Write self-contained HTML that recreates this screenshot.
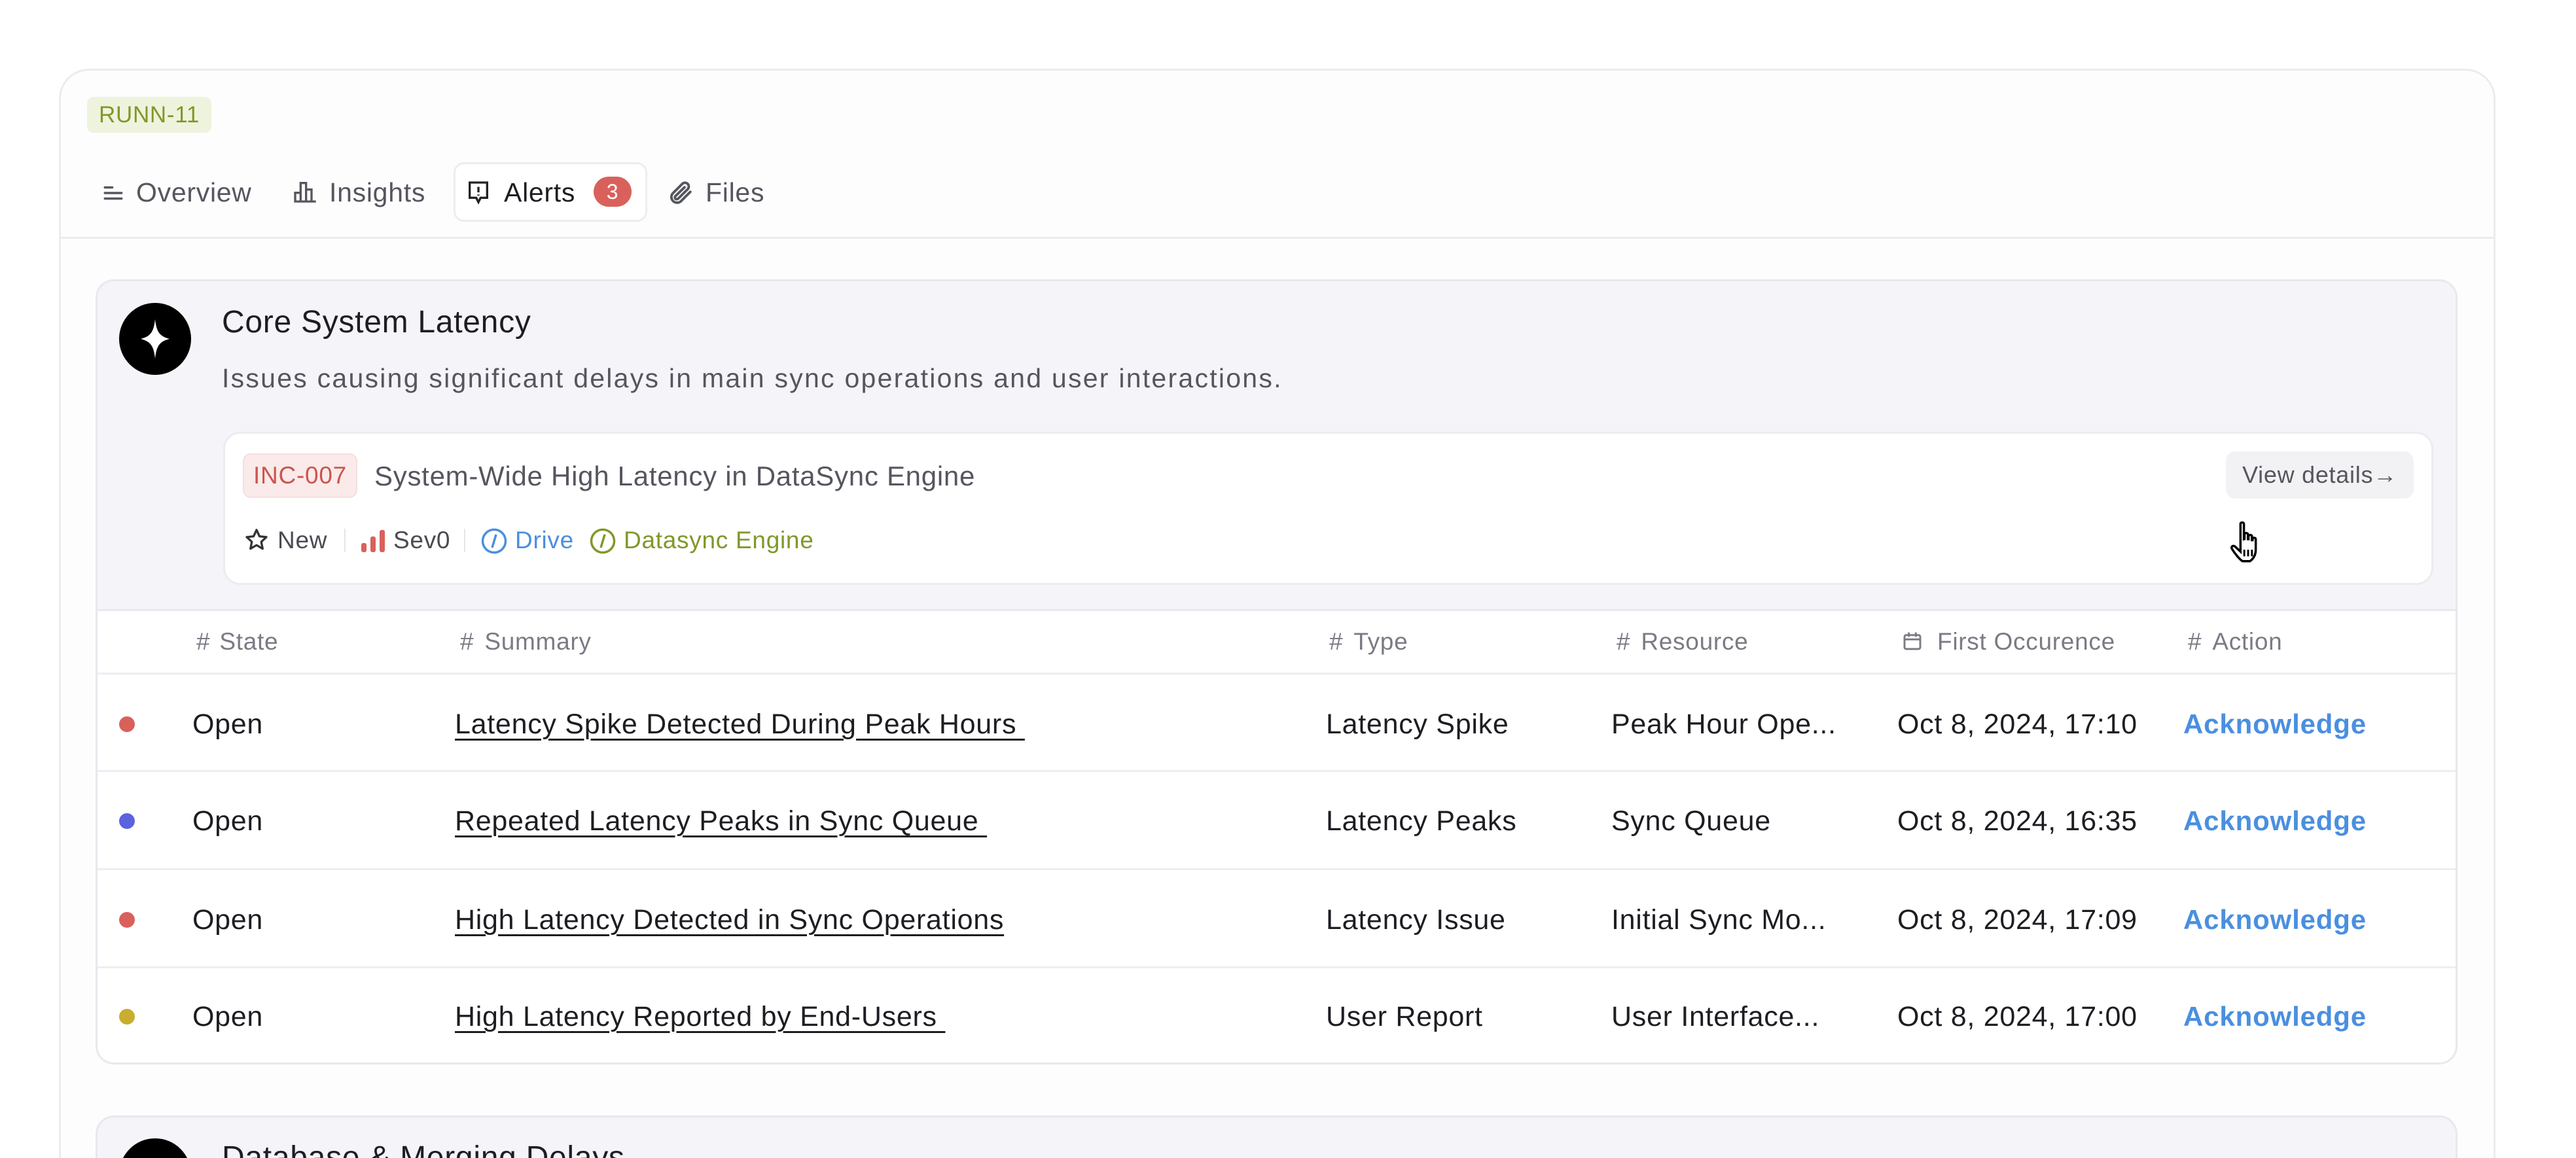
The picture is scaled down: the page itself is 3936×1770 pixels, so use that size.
<!DOCTYPE html>
<html><head><meta charset="utf-8"><style>
*{margin:0;padding:0;box-sizing:border-box}
html,body{width:3936px;height:1770px;overflow:hidden}
body{background:#fff;font-family:"Liberation Sans",sans-serif;color:#1d1d22;letter-spacing:0.045em}
#root{position:relative;width:3936px;height:1770px;overflow:hidden}
.a{position:absolute;white-space:nowrap}
.outer{left:90px;top:105px;width:3723px;height:1665px;border:3px solid #ececee;border-bottom:none;border-radius:46px 46px 0 0;background:#fdfdfd}
.tab{font-size:41px;color:#55565e;top:270px;line-height:48px}
.grp{left:146px;top:427px;width:3609px;height:1200px;border:3px solid #e8e8ee;border-radius:28px;background:#fff;overflow:hidden}
.hdr{font-size:37px;color:#7a7b84;top:958px;line-height:46px}
.cell{font-size:43px;line-height:50px}
.sep{left:149px;width:3603px;height:3px;background:#eeeef2}
.dot{width:24px;height:24px;border-radius:50%;left:182px}
.ack{color:#4a8fe0;font-weight:bold;font-size:42px;letter-spacing:0.02em}
.sum{text-decoration:underline;text-underline-offset:8px;text-decoration-thickness:3px}
</style></head><body><div id="root">
<div class="a outer"></div>
<div class="a" style="left:133px;top:148px;width:190px;height:55px;background:#eef3dd;border-radius:10px;color:#80982a;font-size:35px;line-height:55px;text-align:center;letter-spacing:0.02em">RUNN-11</div>
<svg class="a" style="left:156px;top:278px" width="34" height="34" viewBox="0 0 24 24" fill="none" stroke="#55565e" stroke-width="2.4" stroke-linecap="round"><path d="M3 6h8M3 12h18M3 18h18"/></svg>
<div class="a tab" style="left:208px">Overview</div>
<svg class="a" style="left:446px;top:272px" width="40" height="42" viewBox="0 0 24 24" fill="none" stroke="#55565e" stroke-width="2"><path d="M3 21V13h5v8M8 21V4h5v17M13 21V10h5v11M2 21h20"/></svg>
<div class="a tab" style="left:503px">Insights</div>
<div class="a" style="left:693px;top:248px;width:296px;height:91px;border:3px solid #ededf0;border-radius:16px;background:#fff"></div>
<svg class="a" style="left:711px;top:272px" width="40" height="44" viewBox="0 0 24 24" fill="none" stroke="#222" stroke-width="2"><path d="M4 3h16v14h-6l-2 4-2-4H4z"/><path d="M12 7v5M12 14v1"/></svg>
<div class="a tab" style="left:770px;color:#1d1d22">Alerts</div>
<div class="a" style="left:907px;top:270px;width:58px;height:46px;border-radius:23px;background:#d9615b;color:#fff;font-size:32px;line-height:46px;text-align:center">3</div>
<svg class="a" style="left:1018px;top:274px" width="42" height="42" viewBox="0 0 24 24" fill="none" stroke="#55565e" stroke-width="2.2" stroke-linecap="round"><path d="M21 11l-8.5 8.5a5 5 0 0 1-7-7L14 4a3.3 3.3 0 0 1 4.7 4.7L10.3 17a1.6 1.6 0 0 1-2.3-2.3L16 7"/></svg>
<div class="a tab" style="left:1078px">Files</div>
<div class="a" style="left:93px;top:362px;width:3717px;height:3px;background:#ececee"></div>
<div class="a grp">
 <div style="position:absolute;left:0;top:0;width:100%;height:504px;background:#f4f4f9;border-bottom:3px solid #e8e8ee"></div>
</div>
<div class="a" style="left:182px;top:463px;width:110px;height:110px;border-radius:50%;background:#000"></div>
<svg class="a" style="left:215px;top:488px" width="44" height="60" viewBox="0 0 44 60"><path d="M22 0C24 18 28 26 44 30 28 34 24 42 22 60 20 42 16 34 0 30 16 26 20 18 22 0Z" fill="#fff"/></svg>
<div class="a" style="left:339px;top:464px;font-size:48px;line-height:58px">Core System Latency</div>
<div class="a" style="left:339px;top:553px;font-size:41px;color:#55565e;line-height:50px;letter-spacing:0.055em">Issues causing significant delays in main sync operations and user interactions.</div>
<div class="a" style="left:341px;top:660px;width:3377px;height:234px;background:#fff;border:3px solid #ececf0;border-radius:26px"></div>
<div class="a" style="left:371px;top:693px;width:175px;height:68px;background:#fbeaea;border:2px solid #f6dede;border-radius:12px;color:#c9564f;font-size:37px;line-height:64px;text-align:center;letter-spacing:0.02em">INC-007</div>
<div class="a" style="left:572px;top:703px;font-size:42px;color:#55565e;line-height:50px">System-Wide High Latency in DataSync Engine</div>
<div class="a" style="left:3401px;top:690px;width:287px;height:72px;background:#f2f2f5;border-radius:14px;color:#55565e;font-size:36px;line-height:72px;text-align:center;letter-spacing:0.02em">View details→</div>
<svg class="a" style="left:374px;top:807px" width="36" height="36" viewBox="0 0 24 24" fill="none" stroke="#333" stroke-width="2.2" stroke-linejoin="round"><path d="M12 2l3 6.5 7 .8-5.2 4.8 1.4 7L12 17.5 5.8 21.1l1.4-7L2 9.3l7-.8z"/></svg>
<div class="a" style="left:424px;top:803px;font-size:37px;color:#4a4b52;line-height:46px">New</div>
<div class="a" style="left:526px;top:808px;width:2px;height:36px;background:#e6e6ea"></div>
<svg class="a" style="left:552px;top:810px" width="36" height="34" viewBox="0 0 18 17"><rect x="0" y="10" width="4" height="7" rx="1.5" fill="#d9615b"/><rect x="7" y="5" width="4" height="12" rx="1.5" fill="#d9615b"/><rect x="14" y="0" width="4" height="17" rx="1.5" fill="#d9615b"/></svg>
<div class="a" style="left:601px;top:803px;font-size:37px;color:#4a4b52;line-height:46px">Sev0</div>
<div class="a" style="left:709px;top:808px;width:2px;height:36px;background:#e6e6ea"></div>
<svg class="a" style="left:734px;top:806px" width="42" height="42" viewBox="0 0 24 24" fill="none" stroke="#4a8fe0" stroke-width="2"><circle cx="12" cy="12" r="10"/><path d="M13.5 7l-3 10" stroke-linecap="round"/></svg>
<div class="a" style="left:787px;top:803px;font-size:37px;color:#4a8fe0;line-height:46px">Drive</div>
<svg class="a" style="left:900px;top:806px" width="42" height="42" viewBox="0 0 24 24" fill="none" stroke="#80982a" stroke-width="2"><circle cx="12" cy="12" r="10"/><path d="M13.5 7l-3 10" stroke-linecap="round"/></svg>
<div class="a" style="left:953px;top:803px;font-size:37px;color:#80982a;line-height:46px">Datasync Engine</div>
<svg class="a" style="left:3400px;top:793px" width="70" height="74" viewBox="0 0 24 25"><path d="M8 2.5c0-1 1.8-1 1.8 0v8l.3-.1V8c0-1 1.8-1 1.8 0v2.5h.3V9c0-1 1.8-1 1.8 0v2h.3v-.5c0-1 1.7-1 1.7 0V16c0 3-1.5 5-3 6H9c-1.5-1-4-4-5.5-6.5-.6-1 .6-2 1.6-1.2L8 17z" fill="#fff" stroke="#000" stroke-width="1.2"/><path d="M10 16v3.5M12 16v3.5M14 16v3.5" stroke="#000" stroke-width="1"/></svg>
<div class="a hdr" style="left:300px"><span style="margin-right:14px">#</span>State</div>
<div class="a hdr" style="left:703px"><span style="margin-right:16px">#</span>Summary</div>
<div class="a hdr" style="left:2031px"><span style="margin-right:16px">#</span>Type</div>
<div class="a hdr" style="left:2470px"><span style="margin-right:16px">#</span>Resource</div>
<svg class="a" style="left:2906px;top:963px" width="32" height="34" viewBox="0 0 24 24" fill="none" stroke="#7a7b84" stroke-width="2.2"><rect x="3" y="5" width="18" height="16" rx="2"/><path d="M3 10h18M8 2v5M16 2v5"/></svg>
<div class="a hdr" style="left:2960px">First Occurence</div>
<div class="a hdr" style="left:3343px"><span style="margin-right:16px">#</span>Action</div>
<div class="a sep" style="top:1028px"></div>
<div class="a sep" style="top:1177px"></div>
<div class="a sep" style="top:1327px"></div>
<div class="a sep" style="top:1477px"></div>
<div class="a dot" style="top:1095px;background:#d9615b"></div>
<div class="a cell" style="left:294px;top:1082px">Open</div>
<div class="a cell sum" style="left:695px;top:1082px">Latency Spike Detected During Peak Hours&nbsp;</div>
<div class="a cell" style="left:2026px;top:1082px">Latency Spike</div>
<div class="a cell" style="left:2462px;top:1082px">Peak Hour Ope...</div>
<div class="a cell" style="left:2899px;top:1082px">Oct 8, 2024, 17:10</div>
<div class="a cell ack" style="left:3336px;top:1082px">Acknowledge</div>
<div class="a dot" style="top:1243px;background:#5b62e0"></div>
<div class="a cell" style="left:294px;top:1230px">Open</div>
<div class="a cell sum" style="left:695px;top:1230px">Repeated Latency Peaks in Sync Queue&nbsp;</div>
<div class="a cell" style="left:2026px;top:1230px">Latency Peaks</div>
<div class="a cell" style="left:2462px;top:1230px">Sync Queue</div>
<div class="a cell" style="left:2899px;top:1230px">Oct 8, 2024, 16:35</div>
<div class="a cell ack" style="left:3336px;top:1230px">Acknowledge</div>
<div class="a dot" style="top:1394px;background:#d9615b"></div>
<div class="a cell" style="left:294px;top:1381px">Open</div>
<div class="a cell sum" style="left:695px;top:1381px">High Latency Detected in Sync Operations</div>
<div class="a cell" style="left:2026px;top:1381px">Latency Issue</div>
<div class="a cell" style="left:2462px;top:1381px">Initial Sync Mo...</div>
<div class="a cell" style="left:2899px;top:1381px">Oct 8, 2024, 17:09</div>
<div class="a cell ack" style="left:3336px;top:1381px">Acknowledge</div>
<div class="a dot" style="top:1542px;background:#c9ad2e"></div>
<div class="a cell" style="left:294px;top:1529px">Open</div>
<div class="a cell sum" style="left:695px;top:1529px">High Latency Reported by End-Users&nbsp;</div>
<div class="a cell" style="left:2026px;top:1529px">User Report</div>
<div class="a cell" style="left:2462px;top:1529px">User Interface...</div>
<div class="a cell" style="left:2899px;top:1529px">Oct 8, 2024, 17:00</div>
<div class="a cell ack" style="left:3336px;top:1529px">Acknowledge</div>
<div class="a" style="left:146px;top:1705px;width:3609px;height:65px;overflow:hidden">
 <div style="position:absolute;left:0;top:0;width:3609px;height:200px;border:3px solid #e8e8ee;border-radius:28px;background:#f4f4f9"></div>
 <div style="position:absolute;left:36px;top:35px;width:110px;height:110px;border-radius:50%;background:#000"></div>
 <div style="position:absolute;left:193px;top:36px;font-size:48px;line-height:58px;white-space:nowrap">Database &amp; Merging Delays</div>
</div>
</div></body></html>
